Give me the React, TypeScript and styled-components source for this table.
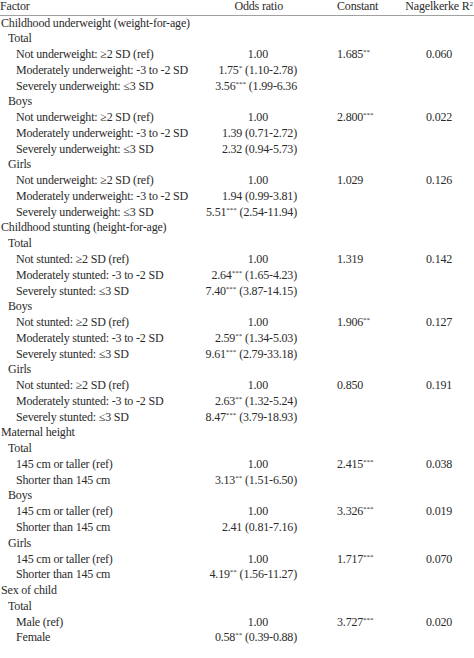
import styled, { createGlobalStyle } from "styled-components";

const GlobalStyle = createGlobalStyle`
  html, body {
    margin: 0;
    padding: 0;
    background: #ffffff;
  }
`;

const Table = styled.div`
  width: 474px;
  font-family: "Liberation Serif", "Times New Roman", serif;
  font-size: 12px;
  letter-spacing: -0.18px;
  color: #2b2b2b;
  display: grid;
  grid-template-columns: 180px 120px 105px 69px;
  grid-template-rows: 15.5px;
  grid-auto-rows: 15.78px;
`;

const HeadCell = styled.div<{ $pad?: string; $align?: string }>`
  line-height: 13px;
  border-bottom: 1.5px solid #a0a0a0;
  white-space: nowrap;
  text-align: ${(p) => p.$align || "left"};
  padding: ${(p) => p.$pad || "0"};
`;

const LabelCell = styled.div<{ $level: number }>`
  line-height: 15.78px;
  white-space: nowrap;
  padding-left: ${(p) => [1, 8, 16][p.$level]}px;
`;

const OddsCell = styled.div<{ $ref?: boolean }>`
  line-height: 15.78px;
  white-space: nowrap;
  text-align: right;
  direction: rtl;
  padding-right: ${(p) => (p.$ref ? "32px" : "3px")};
  span {
    direction: ltr;
    unicode-bidi: embed;
  }
`;

const ValueCell = styled.div<{ $pad: number }>`
  line-height: 15.78px;
  white-space: nowrap;
  padding-left: ${(p) => p.$pad}px;
`;

const Sup = styled.sup`
  font-size: 7px;
  line-height: 0;
  vertical-align: 4px;
  letter-spacing: 0;
`;

type Row = {
  level: number;
  label: string;
  odds?: [string, string, string?];
  constant?: [string, string?];
  r2?: string;
};

const rows: Row[] = [
  { level: 0, label: "Childhood underweight (weight-for-age)" },
  { level: 1, label: "Total" },
  { level: 2, label: "Not underweight: ≥2 SD (ref)", odds: ["1.00", ""], constant: ["1.685", "**"], r2: "0.060" },
  { level: 2, label: "Moderately underweight: -3 to -2 SD", odds: ["1.75", "*", " (1.10-2.78)"] },
  { level: 2, label: "Severely underweight: ≤3 SD", odds: ["3.56", "***", " (1.99-6.36"] },
  { level: 1, label: "Boys" },
  { level: 2, label: "Not underweight: ≥2 SD (ref)", odds: ["1.00", ""], constant: ["2.800", "***"], r2: "0.022" },
  { level: 2, label: "Moderately underweight: -3 to -2 SD", odds: ["1.39", "", " (0.71-2.72)"] },
  { level: 2, label: "Severely underweight: ≤3 SD", odds: ["2.32", "", " (0.94-5.73)"] },
  { level: 1, label: "Girls" },
  { level: 2, label: "Not underweight: ≥2 SD (ref)", odds: ["1.00", ""], constant: ["1.029"], r2: "0.126" },
  { level: 2, label: "Moderately underweight: -3 to -2 SD", odds: ["1.94", "", " (0.99-3.81)"] },
  { level: 2, label: "Severely underweight: ≤3 SD", odds: ["5.51", "***", " (2.54-11.94)"] },
  { level: 0, label: "Childhood stunting (height-for-age)" },
  { level: 1, label: "Total" },
  { level: 2, label: "Not stunted: ≥2 SD (ref)", odds: ["1.00", ""], constant: ["1.319"], r2: "0.142" },
  { level: 2, label: "Moderately stunted: -3 to -2 SD", odds: ["2.64", "***", " (1.65-4.23)"] },
  { level: 2, label: "Severely stunted: ≤3 SD", odds: ["7.40", "***", " (3.87-14.15)"] },
  { level: 1, label: "Boys" },
  { level: 2, label: "Not stunted: ≥2 SD (ref)", odds: ["1.00", ""], constant: ["1.906", "**"], r2: "0.127" },
  { level: 2, label: "Moderately stunted: -3 to -2 SD", odds: ["2.59", "**", " (1.34-5.03)"] },
  { level: 2, label: "Severely stunted: ≤3 SD", odds: ["9.61", "***", " (2.79-33.18)"] },
  { level: 1, label: "Girls" },
  { level: 2, label: "Not stunted: ≥2 SD (ref)", odds: ["1.00", ""], constant: ["0.850"], r2: "0.191" },
  { level: 2, label: "Moderately stunted: -3 to -2 SD", odds: ["2.63", "**", " (1.32-5.24)"] },
  { level: 2, label: "Severely stunted: ≤3 SD", odds: ["8.47", "***", " (3.79-18.93)"] },
  { level: 0, label: "Maternal height" },
  { level: 1, label: "Total" },
  { level: 2, label: "145 cm or taller (ref)", odds: ["1.00", ""], constant: ["2.415", "***"], r2: "0.038" },
  { level: 2, label: "Shorter than 145 cm", odds: ["3.13", "**", " (1.51-6.50)"] },
  { level: 1, label: "Boys" },
  { level: 2, label: "145 cm or taller (ref)", odds: ["1.00", ""], constant: ["3.326", "***"], r2: "0.019" },
  { level: 2, label: "Shorter than 145 cm", odds: ["2.41", "", " (0.81-7.16)"] },
  { level: 1, label: "Girls" },
  { level: 2, label: "145 cm or taller (ref)", odds: ["1.00", ""], constant: ["1.717", "***"], r2: "0.070" },
  { level: 2, label: "Shorter than 145 cm", odds: ["4.19", "**", " (1.56-11.27)"] },
  { level: 0, label: "Sex of child" },
  { level: 1, label: "Total" },
  { level: 2, label: "Male (ref)", odds: ["1.00", ""], constant: ["3.727", "***"], r2: "0.020" },
  { level: 2, label: "Female", odds: ["0.58", "**", " (0.39-0.88)"] },
];

export default function App() {
  return (
    <>
      <GlobalStyle />
      <Table>
        <HeadCell>Factor</HeadCell>
        <HeadCell $align="right" $pad="0 17px 0 0">Odds ratio</HeadCell>
        <HeadCell $pad="0 0 0 37px">Constant</HeadCell>
        <HeadCell $align="right" $pad="0 1px 0 0">
          Nagelkerke R<Sup>2</Sup>
        </HeadCell>
        {rows.map((r, i) => (
          <>
            <LabelCell key={`l${i}`} $level={r.level}>
              {r.label}
            </LabelCell>
            <OddsCell key={`o${i}`} $ref={r.odds?.[0] === "1.00"}>
              {r.odds && (
                <span>
                  {r.odds[0]}
                  {r.odds[1] && <Sup>{r.odds[1]}</Sup>}
                  {r.odds[2]}
                </span>
              )}
            </OddsCell>
            <ValueCell key={`c${i}`} $pad={37}>
              {r.constant && (
                <>
                  {r.constant[0]}
                  {r.constant[1] && <Sup>{r.constant[1]}</Sup>}
                </>
              )}
            </ValueCell>
            <ValueCell key={`r${i}`} $pad={21}>
              {r.r2}
            </ValueCell>
          </>
        ))}
      </Table>
    </>
  );
}
